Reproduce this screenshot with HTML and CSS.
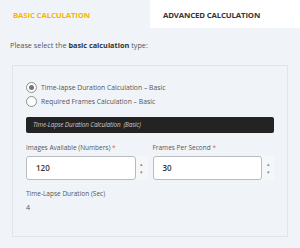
FILE: index.html
```html
<!DOCTYPE html>
<html lang="en">
<head>
  <meta charset="UTF-8">
  <title>Time-Lapse Calculator</title>
  <link rel="stylesheet" href="styles.css">
</head>
<body>
  <div class="tabs">
    <div class="tab tab-active">BASIC CALCULATION</div>
    <div class="tab">ADVANCED CALCULATION</div>
  </div>

  <div class="panel">
    <p class="intro">Please select the <b>basic calculation</b> type:</p>

    <div class="card">
      <div class="options">
        <label class="option">
          <span class="radio radio-checked"></span>
          <span>Time-lapse Duration Calculation – Basic</span>
        </label>
        <label class="option">
          <span class="radio"></span>
          <span>Required Frames Calculation – Basic</span>
        </label>
      </div>

      <div class="title-bar">Time-Lapse Duration Calculation &nbsp;(Basic)</div>

      <div class="fields">
        <div class="field">
          <div class="field-label">Images Available (Numbers) <span class="req">*</span></div>
          <div class="number">
            <div class="number-input">120</div>
            <div class="spin"><span>▴</span><span>▾</span></div>
          </div>
        </div>
        <div class="field">
          <div class="field-label">Frames Per Second <span class="req">*</span></div>
          <div class="number">
            <div class="number-input">30</div>
            <div class="spin"><span>▴</span><span>▾</span></div>
          </div>
        </div>
      </div>

      <div class="result">
        <div class="field-label">Time-Lapse Duration (Sec)</div>
        <div class="result-value">4</div>
      </div>
    </div>
  </div>
</body>
</html>
```

FILE: styles.css
```css
* {
  margin: 0;
  padding: 0;
  box-sizing: border-box;
}

body {
  width: 300px;
  height: 248px;
  font-family: "Open Sans", "Noto Sans", sans-serif;
  background: #f0f4f9;
  color: #555;
  overflow: hidden;
}

.tabs {
  display: flex;
  height: 28px;
}

.tab {
  flex: 1;
  padding: 10px 0 0 13px;
  font-size: 7.8px;
  line-height: 11px;
  font-weight: 700;
  color: #333;
  background: #fff;
  letter-spacing: -0.15px;
}

.tab-active {
  color: #f7b500;
  background: #f0f4f9;
}

.panel {
  padding: 12px 12px 0;
}

.intro {
  font-size: 7.3px;
  line-height: 11px;
  color: #555;
  margin-left: -2px;
  margin-bottom: 14px;
}

.intro b {
  color: #333;
}

.card {
  height: 172px;
  border: 1px solid #e1e5ea;
  background: #f0f4f9;
  padding: 16px 13px 0;
}

.options {
  display: flex;
  flex-direction: column;
  gap: 3px;
  margin-bottom: 10px;
}

.option {
  display: flex;
  align-items: center;
  gap: 4px;
  font-size: 6.8px;
  line-height: 11px;
  color: #555;
}

.radio {
  width: 11px;
  height: 11px;
  border: 1px solid #8f8f8f;
  border-radius: 50%;
  background: #fff;
  position: relative;
}

.radio-checked::after {
  content: "";
  position: absolute;
  left: 2px;
  top: 2px;
  width: 5px;
  height: 5px;
  border-radius: 50%;
  background: #777;
}

.title-bar {
  height: 16px;
  background: #232323;
  border-radius: 2px;
  color: #c8c8c8;
  font-size: 6.4px;
  line-height: 16px;
  font-style: italic;
  letter-spacing: -0.15px;
  padding-left: 7px;
  margin-bottom: 10px;
}

.fields {
  display: flex;
  gap: 5px;
}

.field {
  flex: 1;
}

.field-label {
  font-size: 6.5px;
  line-height: 9px;
  color: #555;
  margin-bottom: 4px;
}

.req {
  color: #e35d6a;
}

.number {
  display: flex;
  height: 24px;
}

.number-input {
  flex: 1;
  background: #fff;
  border: 1px solid #b9bdc2;
  border-radius: 3px;
  font-size: 8px;
  line-height: 22px;
  font-weight: 600;
  color: #333;
  padding-left: 9px;
}

.spin {
  width: 12px;
  display: flex;
  flex-direction: column;
  justify-content: center;
  align-items: center;
  gap: 3px;
  font-size: 5px;
  color: #888;
  background: #f6f7f9;
  line-height: 5px;
}

.result {
  margin-top: 9px;
}

.result-value {
  font-size: 7px;
  line-height: 9px;
  color: #555;
  margin-top: 5px;
}
```
